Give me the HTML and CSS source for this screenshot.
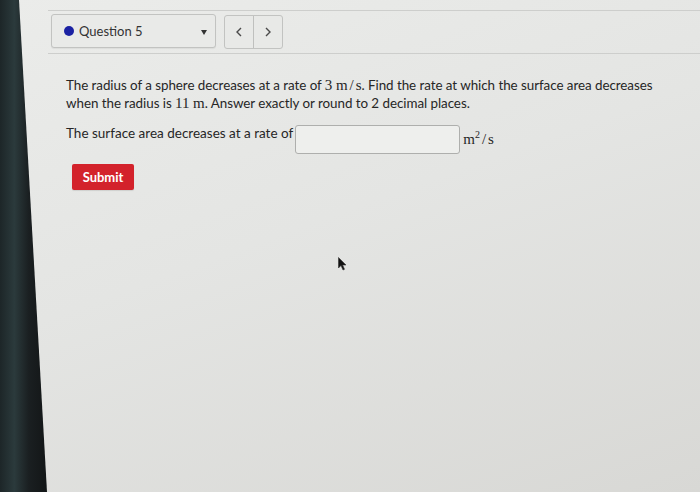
FILE: index.html
```html
<!DOCTYPE html>
<html>
<head>
<meta charset="utf-8">
<link rel="stylesheet" href="styles.css">
</head>
<body>
<div class="screen">
  <div class="header">
    <div class="select">
      <span class="dot"></span>
      <span class="select-label">Question 5</span>
      <span class="caret"></span>
    </div>
    <div class="nav">
      <div class="nav-btn">
        <svg width="8" height="10" viewBox="0 0 8 10"><path d="M6 1 L2 5 L6 9" fill="none" stroke="#4a4a4a" stroke-width="1.4"/></svg>
      </div>
      <div class="nav-btn">
        <svg width="8" height="10" viewBox="0 0 8 10"><path d="M2 1 L6 5 L2 9" fill="none" stroke="#4a4a4a" stroke-width="1.4"/></svg>
      </div>
    </div>
  </div>
  <div class="content">
    <p class="question">The radius of a sphere decreases at a rate of <span class="math">3&nbsp;m<span class="op">/</span>s</span>. Find the rate at which the surface area decreases when the radius is <span class="math">11&nbsp;m</span>. Answer exactly or round to 2 decimal places.</p>
    <div class="answer-row">
      <span class="answer-label">The surface area decreases at a rate of</span>
      <span class="answer-box"></span>
      <span class="math unit">m<sup>2</sup><span class="op">/</span>s</span>
    </div>
    <button class="submit">Submit</button>
  </div>
</div>
<span class="cursor">
  <svg width="9" height="14" viewBox="0 0 9 14"><path d="M0.5 0.5 L0.5 11 L3 8.5 L5 13 L6.5 12.3 L4.6 8 L8 8 Z" fill="#111" stroke="#333" stroke-width="0.6"/></svg>
</span>
</body>
</html>
```

FILE: styles.css
```css
html, body {
  margin: 0;
  padding: 0;
}
body {
  width: 700px;
  height: 492px;
  overflow: hidden;
  position: relative;
  background: linear-gradient(160deg, #ebecea 0%, #e4e5e3 45%, #d8d8d5 100%);
  font-family: "Lato", "Open Sans", "Liberation Sans", sans-serif;
  color: #262626;
}
body::before {
  content: "";
  position: absolute;
  left: 0;
  top: 0;
  width: 48px;
  height: 492px;
  background: linear-gradient(90deg, #1d2628 0%, #2b3a3c 30%, #1a1f21 60%, #121516 100%);
  clip-path: polygon(0 0, 19px 0, 47px 100%, 0 100%);
}
.screen {
  padding-left: 48px;
  padding-top: 10px;
}
.header {
  display: flex;
  align-items: center;
  gap: 8px;
  border-top: 1px solid #cdcecc;
  border-bottom: 1px solid #cdcecc;
  padding: 2px 0 4px 3px;
}
.select {
  width: 163px;
  height: 32px;
  display: flex;
  align-items: center;
  border: 1px solid #c2c3c1;
  border-radius: 3px;
  background: #e9eae8;
  box-shadow: 0 1px 1px rgba(0,0,0,0.06);
}
.dot {
  width: 10px;
  height: 10px;
  border-radius: 50%;
  background: #1b22a3;
  margin-left: 12px;
}
.select-label {
  margin-left: 5px;
  font-size: 13px;
  color: #333;
  flex: 1;
}
.caret {
  width: 0;
  height: 0;
  border-left: 3.5px solid transparent;
  border-right: 3.5px solid transparent;
  border-top: 5px solid #333;
  margin-right: 8px;
  margin-top: 2px;
}
.nav {
  display: flex;
  height: 32px;
  border: 1px solid #c2c3c1;
  border-radius: 3px;
  background: #e8e9e7;
  margin-top: 2px;
}
.nav-btn {
  width: 28px;
  display: flex;
  align-items: center;
  justify-content: center;
}
.nav-btn + .nav-btn {
  border-left: 1px solid #bfc0be;
}
.content {
  padding-left: 18px;
}
.question {
  margin: 22px 0 0 0;
  font-size: 13.4px;
  line-height: 18px;
  width: 610px;
  letter-spacing: -0.05px;
}
.math {
  font-family: "Liberation Serif", "DejaVu Serif", serif;
  font-size: 15px;
  line-height: 1;
}
.op {
  margin: 0 2px;
}
.answer-row {
  display: flex;
  align-items: flex-start;
  margin-top: 12px;
}
.answer-label {
  font-size: 13.5px;
  line-height: 18px;
}
.answer-box {
  width: 163px;
  height: 27px;
  border: 1px solid #aeafad;
  border-radius: 3px;
  background: #eeefed;
  margin-left: 2px;
  margin-top: 1px;
}
.unit {
  margin-left: 3px;
  margin-top: 8px;
}
.unit sup {
  font-size: 10px;
  vertical-align: 6px;
  line-height: 0;
}
.submit {
  display: block;
  margin: 10px 0 0 6px;
  width: 62px;
  height: 26px;
  border: none;
  border-radius: 2px;
  background: #d3222b;
  color: #fff;
  font-family: "Lato", "Open Sans", sans-serif;
  font-weight: bold;
  font-size: 13px;
  padding: 0;
  box-shadow: 0 1px 1px rgba(0,0,0,0.1);
}
.cursor {
  position: absolute;
  left: 338px;
  top: 257px;
  line-height: 0;
}
```
